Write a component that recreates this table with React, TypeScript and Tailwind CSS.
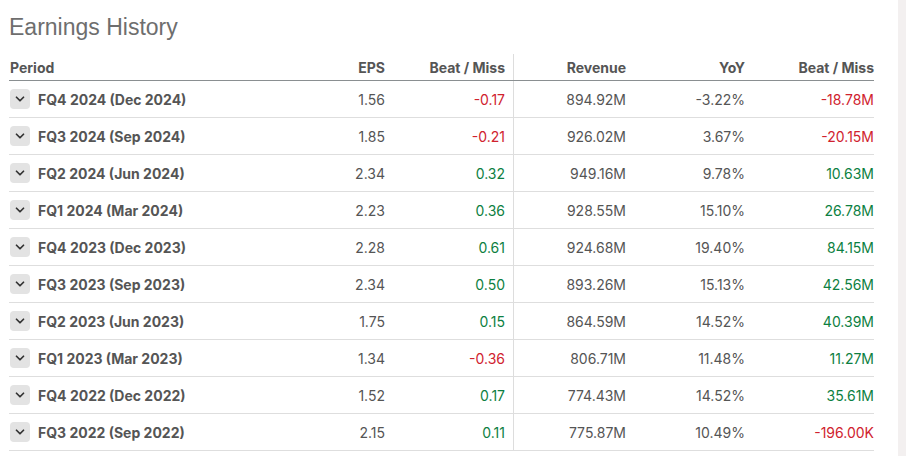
import React from "react";
import { ChevronDown } from "lucide-react";

interface EarningsRow {
  period: string;
  eps: string;
  epsBeat: string;
  revenue: string;
  yoy: string;
  revBeat: string;
}

const rows: EarningsRow[] = [
  { period: "FQ4 2024 (Dec 2024)", eps: "1.56", epsBeat: "-0.17", revenue: "894.92M", yoy: "-3.22%", revBeat: "-18.78M" },
  { period: "FQ3 2024 (Sep 2024)", eps: "1.85", epsBeat: "-0.21", revenue: "926.02M", yoy: "3.67%", revBeat: "-20.15M" },
  { period: "FQ2 2024 (Jun 2024)", eps: "2.34", epsBeat: "0.32", revenue: "949.16M", yoy: "9.78%", revBeat: "10.63M" },
  { period: "FQ1 2024 (Mar 2024)", eps: "2.23", epsBeat: "0.36", revenue: "928.55M", yoy: "15.10%", revBeat: "26.78M" },
  { period: "FQ4 2023 (Dec 2023)", eps: "2.28", epsBeat: "0.61", revenue: "924.68M", yoy: "19.40%", revBeat: "84.15M" },
  { period: "FQ3 2023 (Sep 2023)", eps: "2.34", epsBeat: "0.50", revenue: "893.26M", yoy: "15.13%", revBeat: "42.56M" },
  { period: "FQ2 2023 (Jun 2023)", eps: "1.75", epsBeat: "0.15", revenue: "864.59M", yoy: "14.52%", revBeat: "40.39M" },
  { period: "FQ1 2023 (Mar 2023)", eps: "1.34", epsBeat: "-0.36", revenue: "806.71M", yoy: "11.48%", revBeat: "11.27M" },
  { period: "FQ4 2022 (Dec 2022)", eps: "1.52", epsBeat: "0.17", revenue: "774.43M", yoy: "14.52%", revBeat: "35.61M" },
  { period: "FQ3 2022 (Sep 2022)", eps: "2.15", epsBeat: "0.11", revenue: "775.87M", yoy: "10.49%", revBeat: "-196.00K" },
];

// negative beat/miss values are red, positive ones green
const tone = (v: string) =>
  v.startsWith("-") ? "text-[#d0222e]" : "text-[#0d7f42]";

const grid =
  "grid grid-cols-[296px_80px_129px_112px_119px_129px] items-center";

export default function App() {
  return (
    <div
      className="flex min-h-[456px] bg-white"
      style={{ fontFamily: '"Liberation Sans", Arial, sans-serif' }}
    >
      <div className="w-[898px] shrink-0 pl-[9px]">
        <h2 className="mt-[13px] h-[28px] text-[23px] leading-[28px] font-normal text-[#6e6e6e]">
          Earnings History
        </h2>

        <div
          className="mt-[13px] w-[865px] text-[14px]"
          style={{ fontFamily: "Inter, sans-serif" }}
        >
          {/* header */}
          <div className={`${grid} h-[27px] border-b border-[#8a8f91] font-bold text-[#555]`}>
            <div className="pl-[1px]">Period</div>
            <div className="text-right">EPS</div>
            <div className="h-full flex items-center justify-end pr-[8px] border-r border-[#dddddd]">
              Beat / Miss
            </div>
            <div className="text-right">Revenue</div>
            <div className="text-right">YoY</div>
            <div className="text-right">Beat / Miss</div>
          </div>

          {rows.map((r) => (
            <div
              key={r.period}
              className={`${grid} h-[37px] border-b border-[#dedede] text-[#555]`}
            >
              <div className="flex items-center gap-[8px] pl-[1px]">
                <button className="w-[20px] h-[20px] rounded-[4px] bg-[#e3e3e3] flex items-center justify-center">
                  <ChevronDown size={14} strokeWidth={3} className="text-[#333]" />
                </button>
                <span className="font-bold">{r.period}</span>
              </div>
              <div className="text-right">{r.eps}</div>
              <div className={`h-full flex items-center justify-end pr-[8px] border-r border-[#dddddd] ${tone(r.epsBeat)}`}>
                {r.epsBeat}
              </div>
              <div className="text-right">{r.revenue}</div>
              <div className="text-right">{r.yoy}</div>
              <div className={`text-right ${tone(r.revBeat)}`}>{r.revBeat}</div>
            </div>
          ))}
        </div>
      </div>
      <div className="flex-1 bg-[#f3f0f0]" />
    </div>
  );
}
